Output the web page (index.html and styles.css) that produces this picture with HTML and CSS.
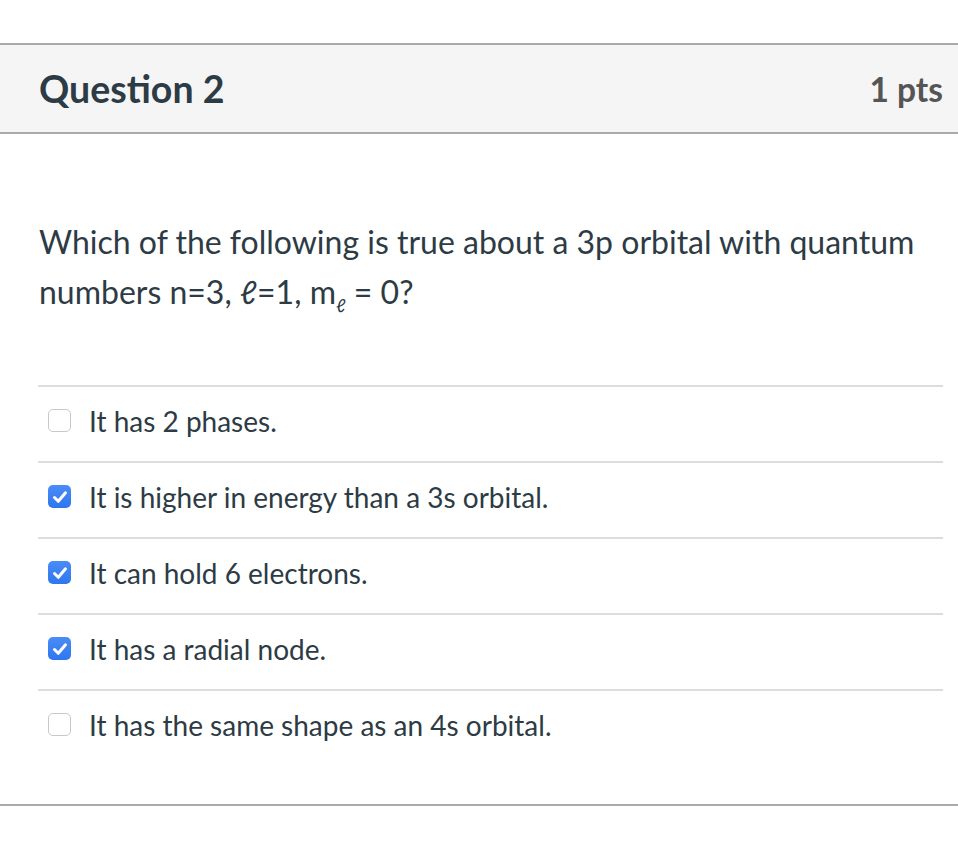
FILE: index.html
```html
<!DOCTYPE html>
<html>
<head>
<meta charset="utf-8">
<link rel="stylesheet" href="styles.css">
</head>
<body>
<div class="question">
  <div class="q-header">
    <div class="q-title">Question 2</div>
    <div class="q-points">1 pts</div>
  </div>
  <div class="q-text">Which of the following is true about a 3p orbital with quantum numbers n=3, ℓ=1, m<sub>ℓ</sub> = 0?</div>
  <div class="answers">
    <div class="answer"><span class="box"></span><span class="label">It has 2 phases.</span></div>
    <div class="answer"><span class="box checked"><svg viewBox="0 0 22 22" width="22" height="22"><path d="M5.5 11.5 L9.3 15.3 L16.5 6.8" fill="none" stroke="#fff" stroke-width="3" stroke-linecap="round" stroke-linejoin="round"/></svg></span><span class="label">It is higher in energy than a 3s orbital.</span></div>
    <div class="answer"><span class="box checked"><svg viewBox="0 0 22 22" width="22" height="22"><path d="M5.5 11.5 L9.3 15.3 L16.5 6.8" fill="none" stroke="#fff" stroke-width="3" stroke-linecap="round" stroke-linejoin="round"/></svg></span><span class="label">It can hold 6 electrons.</span></div>
    <div class="answer"><span class="box checked"><svg viewBox="0 0 22 22" width="22" height="22"><path d="M5.5 11.5 L9.3 15.3 L16.5 6.8" fill="none" stroke="#fff" stroke-width="3" stroke-linecap="round" stroke-linejoin="round"/></svg></span><span class="label">It has a radial node.</span></div>
    <div class="answer"><span class="box"></span><span class="label">It has the same shape as an 4s orbital.</span></div>
  </div>
</div>
</body>
</html>
```

FILE: styles.css
```css
html, body {
  margin: 0;
  padding: 0;
  background: #fff;
}
body {
  font-family: Lato, "Open Sans", sans-serif;
  color: #2d3b45;
}
.question {
  margin-top: 43px;
  border-top: 2px solid #aaaaaa;
  border-bottom: 2px solid #aaaaaa;
  padding-bottom: 39px;
}
.q-header {
  display: flex;
  justify-content: space-between;
  align-items: center;
  height: 87px;
  padding: 0 15px 0 39px;
  background: #f5f5f5;
  border-bottom: 2px solid #aaaaaa;
}
.q-title {
  font-weight: 700;
  font-size: 37.5px;
  color: #2d3b45;
}
.q-points {
  font-weight: 700;
  font-size: 33.5px;
  color: #555555;
}
.q-text {
  margin: 83px 39px 0 39px;
  font-size: 32px;
  line-height: 50px;
}
.q-text sub {
  font-size: 18px;
  line-height: 0;
  vertical-align: -8px;
}
.answers {
  margin: 68px 15px 0 38px;
}
.answer {
  display: flex;
  align-items: center;
  height: 67px;
  padding-bottom: 7px;
  border-top: 2px solid #dddddd;
}
.box {
  flex: none;
  box-sizing: border-box;
  width: 23px;
  height: 23px;
  margin-left: 10px;
  margin-right: 18px;
  border: 1px solid #c8c8c8;
  border-radius: 5px;
  background: #fff;
  display: flex;
  align-items: center;
  justify-content: center;
}
.box.checked {
  border: none;
  background: linear-gradient(#4a8cf7, #2f76ef);
}
.label {
  font-size: 28px;
  line-height: 32px;
}
```
